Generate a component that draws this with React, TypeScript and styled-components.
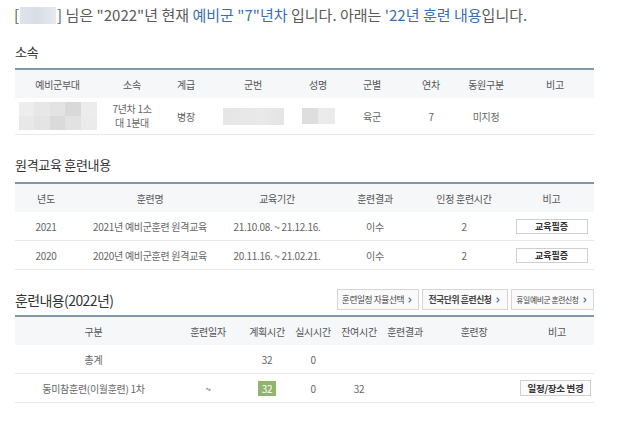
import React from 'react';
import styled, { createGlobalStyle } from 'styled-components';
import { ChevronRight } from 'lucide-react';

const GlobalStyle = createGlobalStyle`
  html, body {
    margin: 0;
    padding: 0;
    background: #ffffff;
  }
  body {
    font-family: "Noto Sans CJK KR", "Noto Sans", sans-serif;
    color: #555555;
  }
`;

const unitMosaic = [
  '#ededed', '#e7e7e7', '#e3e3e3', '#d9d9d9', '#ececec',
  '#e8e8e8', '#e4e4e4', '#dadada', '#e2e2e2', '#ebebeb',
];

const remoteRows = [
  { year: '2021', name: '2021년 예비군훈련 원격교육', period: '21.10.08. ~ 21.12.16.', result: '이수', hours: '2' },
  { year: '2020', name: '2020년 예비군훈련 원격교육', period: '20.11.16. ~ 21.02.21.', result: '이수', hours: '2' },
];

const App = () => {
  return (
    <Page>
      <GlobalStyle />
      <Intro>
        [<NameBlur />] 님은 "2022"년 현재 <Hi>예비군 "7"년차</Hi> 입니다. 아래는 <Hi>'22년 훈련 내용</Hi>입니다.
      </Intro>

      <Section $gap={17}>
        <SectionHead>
          <Title>소속</Title>
        </SectionHead>
        <Table $gap={6}>
          <colgroup>
            <col style={{ width: 85 }} />
            <col style={{ width: 64 }} />
            <col style={{ width: 44 }} />
            <col style={{ width: 90 }} />
            <col style={{ width: 40 }} />
            <col style={{ width: 68 }} />
            <col style={{ width: 50 }} />
            <col style={{ width: 60 }} />
            <col style={{ width: 78 }} />
          </colgroup>
          <thead>
            <tr>
              <Th>예비군부대</Th>
              <Th>소속</Th>
              <Th>계급</Th>
              <Th>군번</Th>
              <Th>성명</Th>
              <Th>군별</Th>
              <Th>연차</Th>
              <Th>동원구분</Th>
              <Th>비고</Th>
            </tr>
          </thead>
          <tbody>
            <tr>
              <Td $tall>
                <Mosaic>
                  {unitMosaic.map((c, i) => (
                    <MosaicCell key={i} style={{ background: c }} />
                  ))}
                </Mosaic>
              </Td>
              <Td $tall>
                <TwoLine>
                  7년차 1소
                  <br />
                  대 1분대
                </TwoLine>
              </Td>
              <Td $tall>병장</Td>
              <Td $tall>
                <Blur $w={61} $h={17} />
              </Td>
              <Td $tall>
                <SplitBlur>
                  <span />
                  <span />
                </SplitBlur>
              </Td>
              <Td $tall>육군</Td>
              <Td $tall>7</Td>
              <Td $tall>미지정</Td>
              <Td $tall></Td>
            </tr>
          </tbody>
        </Table>
      </Section>

      <Section $gap={20}>
        <SectionHead>
          <Title>원격교육 훈련내용</Title>
        </SectionHead>
        <Table $gap={7}>
          <colgroup>
            <col style={{ width: 62 }} />
            <col style={{ width: 146 }} />
            <col style={{ width: 108 }} />
            <col style={{ width: 88 }} />
            <col style={{ width: 90 }} />
            <col style={{ width: 85 }} />
          </colgroup>
          <thead>
            <tr>
              <Th>년도</Th>
              <Th>훈련명</Th>
              <Th>교육기간</Th>
              <Th>훈련결과</Th>
              <Th>인정 훈련시간</Th>
              <Th>비고</Th>
            </tr>
          </thead>
          <tbody>
            {remoteRows.map((r) => (
              <tr key={r.year}>
                <Td>{r.year}</Td>
                <Td>{r.name}</Td>
                <Td>{r.period}</Td>
                <Td>{r.result}</Td>
                <Td>{r.hours}</Td>
                <Td>
                  <CertButton>교육필증</CertButton>
                </Td>
              </tr>
            ))}
          </tbody>
        </Table>
      </Section>

      <Section $gap={19}>
        <SectionHead>
          <Title $large>훈련내용(2022년)</Title>
          <Actions>
            <ActionButton $w={82} $size={8.7}>
              훈련일정 자율선택 <Chevron size={8} strokeWidth={3.2} />
            </ActionButton>
            <ActionButton $w={86} $size={8.8} $bold>
              전국단위 훈련신청 <Chevron size={8} strokeWidth={3.2} />
            </ActionButton>
            <ActionButton $w={83} $size={7.8}>
              휴일예비군 훈련신청 <Chevron size={8} strokeWidth={3.2} />
            </ActionButton>
          </Actions>
        </SectionHead>
        <Table $gap={5}>
          <colgroup>
            <col style={{ width: 157 }} />
            <col style={{ width: 72 }} />
            <col style={{ width: 46 }} />
            <col style={{ width: 46 }} />
            <col style={{ width: 46 }} />
            <col style={{ width: 46 }} />
            <col style={{ width: 92 }} />
            <col style={{ width: 74 }} />
          </colgroup>
          <thead>
            <tr>
              <Th>구분</Th>
              <Th>훈련일자</Th>
              <Th>계획시간</Th>
              <Th>실시시간</Th>
              <Th>잔여시간</Th>
              <Th>훈련결과</Th>
              <Th>훈련장</Th>
              <Th>비고</Th>
            </tr>
          </thead>
          <tbody>
            <tr>
              <Td>총계</Td>
              <Td></Td>
              <Td>32</Td>
              <Td>0</Td>
              <Td></Td>
              <Td></Td>
              <Td></Td>
              <Td></Td>
            </tr>
            <tr>
              <Td>동미참훈련(이월훈련) 1차</Td>
              <Td>~</Td>
              <Td>
                <PlanBadge>32</PlanBadge>
              </Td>
              <Td>0</Td>
              <Td>32</Td>
              <Td></Td>
              <Td></Td>
              <Td>
                <ChangeButton>일정/장소 변경</ChangeButton>
              </Td>
            </tr>
          </tbody>
        </Table>
      </Section>
    </Page>
  );
};

export default App;

const Page = styled.div`
  width: 579px;
  padding: 5px 0 0 15px;
`;

const Intro = styled.div`
  height: 20px;
  line-height: 20px;
  font-size: 15px;
  letter-spacing: 0.02px;
  color: #5a5a5a;
  margin-left: -1px;
  white-space: nowrap;
`;

const NameBlur = styled.span`
  display: inline-block;
  width: 36px;
  height: 17px;
  margin: 0 1px;
  vertical-align: -3px;
  background: linear-gradient(90deg, #dfe4ea 0%, #d8dee6 45%, #e6e9ee 100%);
`;

const Hi = styled.span`
  color: #3a6fae;
`;

const Section = styled.section<{ $gap: number }>`
  margin-top: ${(p) => p.$gap}px;
`;

const SectionHead = styled.div`
  display: flex;
  align-items: center;
  justify-content: space-between;
  min-height: 20px;
`;

const Title = styled.h3<{ $large?: boolean }>`
  margin: 0;
  font-size: ${(p) => (p.$large ? 14 : 13)}px;
  font-weight: 400;
  line-height: 20px;
  letter-spacing: ${(p) => (p.$large ? -0.6 : -0.3)}px;
  color: #333333;
`;

const Actions = styled.div`
  display: flex;
  gap: 3px;
`;

const ActionButton = styled.button<{ $w: number; $size: number; $bold?: boolean }>`
  display: flex;
  align-items: center;
  justify-content: center;
  gap: 2px;
  width: ${(p) => p.$w}px;
  height: 21px;
  padding: 0;
  border: 1px solid #d6d6d6;
  background: #fafafa;
  font-family: inherit;
  font-size: ${(p) => p.$size}px;
  font-weight: ${(p) => (p.$bold ? 700 : 400)};
  letter-spacing: -0.4px;
  color: #444444;
  white-space: nowrap;
`;

const Chevron = styled(ChevronRight)`
  color: #4d74a2;
  flex-shrink: 0;
`;

const Table = styled.table<{ $gap: number }>`
  width: 579px;
  margin-top: ${(p) => p.$gap}px;
  table-layout: fixed;
  border-collapse: separate;
  border-spacing: 0;
`;

const Th = styled.th`
  height: 28px;
  padding: 0;
  border-top: 2px solid #7f97a6;
  background: #f6f7f9;
  font-size: 10px;
  font-weight: 400;
  letter-spacing: -0.3px;
  color: #555555;
  text-align: center;
  white-space: nowrap;
`;

const Td = styled.td<{ $tall?: boolean }>`
  height: ${(p) => (p.$tall ? 36 : 28)}px;
  padding: 0;
  border-bottom: 1px solid #e9e9e9;
  font-size: 10px;
  letter-spacing: -0.3px;
  color: #666666;
  text-align: center;
  white-space: nowrap;
`;

const TwoLine = styled.div`
  line-height: 14px;
`;

const Mosaic = styled.div`
  display: grid;
  grid-template-columns: repeat(5, 1fr);
  width: 78px;
  height: 28px;
  margin: 0 auto;
`;

const MosaicCell = styled.span`
  display: block;
`;

const Blur = styled.div<{ $w: number; $h: number }>`
  width: ${(p) => p.$w}px;
  height: ${(p) => p.$h}px;
  margin: 0 auto;
  background: linear-gradient(90deg, #e6e6e6, #e9e9e9 60%, #e4e4e4);
`;

const SplitBlur = styled.div`
  display: flex;
  width: 33px;
  height: 16px;
  margin: 0 auto;

  span {
    flex: 1;
    background: #dedede;
  }
  span + span {
    background: #ebebeb;
  }
`;

const CertButton = styled.button`
  width: 72px;
  height: 15px;
  padding: 0;
  border: 1px solid #cfcfcf;
  background: #ffffff;
  font-family: inherit;
  font-size: 9px;
  font-weight: 700;
  line-height: 13px;
  color: #333333;
`;

const ChangeButton = styled.button`
  width: 71px;
  height: 16px;
  padding: 0;
  margin-right: 8px;
  border: 1px solid #cfcfcf;
  background: #fafafa;
  font-family: inherit;
  font-size: 9.5px;
  font-weight: 700;
  line-height: 14px;
  letter-spacing: -0.3px;
  color: #333333;
`;

const PlanBadge = styled.span`
  display: inline-block;
  width: 18px;
  height: 15px;
  line-height: 15px;
  background: #8fb46c;
  color: #ffffff;
`;
